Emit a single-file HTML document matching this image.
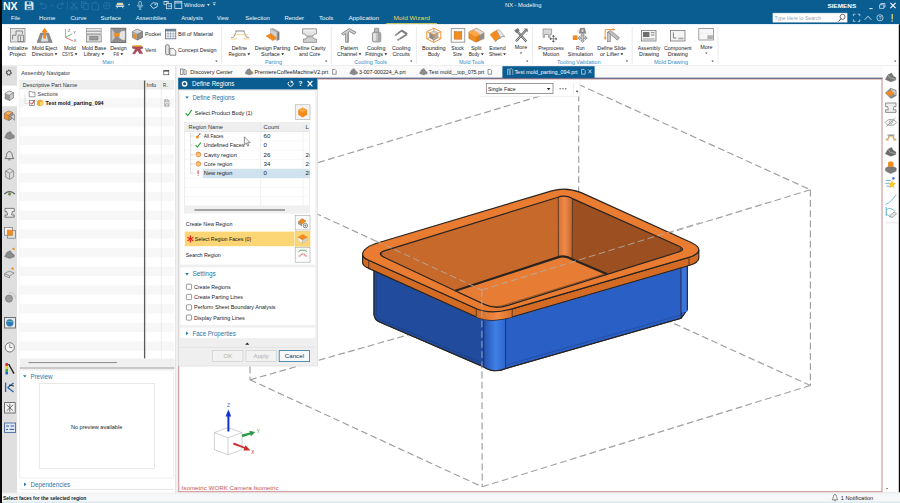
<!DOCTYPE html>
<html lang="en"><head><meta charset="utf-8"><title>NX - Modeling</title>
<style>
html,body{margin:0;padding:0;background:#fff;overflow:hidden}
body{width:900px;height:503px;position:relative}
svg{position:absolute;left:0;top:0;display:block;font-family:"Liberation Sans", sans-serif;}
text{white-space:pre}
</style></head><body>
<svg width="900" height="503" viewBox="0 0 900 503">
<defs>
<clipPath id="cl3"><rect x="300" y="120" width="9.6" height="95"/></clipPath>
<linearGradient id="gfil" x1="0" x2="1" y1="0" y2="0"><stop offset="0" stop-color="#2552b0"/><stop offset="0.55" stop-color="#3f7fe6"/><stop offset="1" stop-color="#2e66cf"/></linearGradient>
<linearGradient id="gofil" x1="0" x2="1" y1="0" y2="0"><stop offset="0" stop-color="#d5702f"/><stop offset="0.45" stop-color="#ef8a4c"/><stop offset="1" stop-color="#c4652b"/></linearGradient>
<linearGradient id="gorf" x1="0" x2="1" y1="0" y2="0"><stop offset="0" stop-color="#d06a25"/><stop offset="0.6" stop-color="#f08a45"/><stop offset="1" stop-color="#d8722c"/></linearGradient>
</defs>
<rect x="0" y="0" width="900" height="503" fill="#ffffff" />
<rect x="0" y="0" width="900" height="24.3" fill="#0a5d90" />
<text x="3" y="9.5" font-size="10" fill="#fff" font-weight="bold" textLength="14.6" lengthAdjust="spacingAndGlyphs" >NX</text>
<g transform="translate(0,-0.5)">
<path d="M25,2.2h7.2l1,1v7h-8.2z" fill="#cfe2ee" stroke="#e4eef5" stroke-width="0.5" />
<rect x="26.8" y="2.4" width="4.2" height="2.6" fill="#0a5d90" />
<rect x="29.4" y="2.8" width="1" height="1.8" fill="#cfe2ee" />
<rect x="26.6" y="6.6" width="5" height="3.4" fill="#0a5d90" />
<rect x="27.6" y="7.6" width="3" height="1.2" fill="#cfe2ee" />
<path d="M40.4,4.4h3.4a2.4,2.4 0 0 1 0,4.8h-1.8 M42,2.4l-2.2,2l2.2,2" fill="none" stroke="#2878ad" stroke-width="0.9" />
<rect x="51.6" y="5.4" width="1.2" height="1.2" fill="#2878ad" />
<path d="M63,4.4h-3.4a2.4,2.4 0 0 0 0,4.8h1.8 M61.4,2.4l2.2,2l-2.2,2" fill="none" stroke="#2878ad" stroke-width="0.9" />
<line x1="67.5" y1="2" x2="67.5" y2="10.4" stroke="#2878ad" stroke-width="0.5" />
<path d="M71.4,2.6l4.6,5.6 M76.4,2.6l-4.6,5.6" fill="none" stroke="#2878ad" stroke-width="0.9" />
<circle cx="71.6" cy="8.8" r="1.2" fill="none" stroke="#2878ad" stroke-width="0.7"/>
<circle cx="76.4" cy="8.8" r="1.2" fill="none" stroke="#2878ad" stroke-width="0.7"/>
<rect x="81.4" y="2.4" width="4.4" height="5.8" fill="none" stroke="#2878ad" stroke-width="0.8" />
<rect x="83.8" y="4" width="4.4" height="6" fill="#0a5d90" stroke="#2878ad" stroke-width="0.8" />
<path d="M92,3.4h4.2l2.4,2.4v4.6h-6.6z M94,2.6h2.6" fill="none" stroke="#2878ad" stroke-width="0.8" />
<circle cx="106.8" cy="6.2" r="3.4" fill="none" stroke="#2878ad" stroke-width="0.7"/>
<path d="M106.8,2.8v6.8 M103.4,6.2h6.8" fill="none" stroke="#2878ad" stroke-width="0.6" />
<path d="M116.4,5.6h7.2l-0.8,-2.4h-5.6z" fill="#e6d9a8" />
<path d="M115.8,6h8.4v1.4h-8.4z" fill="#d8e6f0" />
<path d="M116.6,8.6l1.4,-1.2 M123.4,8.6l-1.4,-1.2" fill="none" stroke="#d8e6f0" stroke-width="0.8" />
<rect x="128.4" y="4.4" width="1.3" height="1.3" fill="#d8e6f0" />
<rect x="138.8" y="1.8" width="2.6" height="5" fill="none" stroke="#cfe2ee" stroke-width="0.7" rx="1.3" />
<path d="M137.4,5.4c0,3.2 5.4,3.2 5.4,0 M140.1,8v1.8 M138.8,9.8h2.6" fill="none" stroke="#cfe2ee" stroke-width="0.6" />
<path d="M150.4,5.6l2.8,-2.4l4.4,0.6l-0.6,3.6l-3.8,1.6z" fill="none" stroke="#e4eef5" stroke-width="0.8" />
<rect x="154.6" y="4.4" width="1.2" height="1.2" fill="#e4eef5" />
<path d="M164,2h4.4v3" fill="none" stroke="#d8e6f0" stroke-width="0.8" />
<rect x="164" y="2" width="3" height="3" fill="none" stroke="#d8e6f0" stroke-width="0.7" />
<rect x="166.4" y="4.2" width="5" height="5" fill="#0a5d90" stroke="#d8e6f0" stroke-width="0.8" />
<line x1="168" y1="6.6" x2="171.4" y2="6.6" stroke="#d8e6f0" stroke-width="0.8" />
<rect x="174.8" y="1.8" width="7" height="7.2" fill="none" stroke="#d8e6f0" stroke-width="0.8" />
<line x1="174.8" y1="3.4" x2="181.8" y2="3.4" stroke="#d8e6f0" stroke-width="0.9" />
<text x="184" y="7.56" font-size="6.0" fill="#e8f0f6" textLength="20.6" lengthAdjust="spacingAndGlyphs" >Window</text>
<path d="M207,4.6l1.5,1.8l1.5,-1.8z" fill="#d8e6f0" />
<path d="M212.8,4.2l1.5,1.9l1.5,-1.9z" fill="#d8e6f0" />
<line x1="212.8" y1="3" x2="215.8" y2="3" stroke="#d8e6f0" stroke-width="0.6" />
</g>
<text x="505" y="7.49" font-size="5.8" fill="#eef4f8" textLength="36.5" lengthAdjust="spacingAndGlyphs" >NX - Modeling</text>
<text x="827.6" y="8.05" font-size="5.7" fill="#fff" font-weight="bold" textLength="28.6" lengthAdjust="spacingAndGlyphs" >SIEMENS</text>
<rect x="869.4" y="8.2" width="3.2" height="0.9" fill="#fff" />
<path d="M879.6,4.8h4.2v3.6h-4.2z M880.8,4.8v-1.3h4.2v3.6h-1.2" fill="none" stroke="#e8f0f6" stroke-width="0.7" />
<path d="M890.4,2.8l5.2,5.4 M895.6,2.8l-5.2,5.4" fill="none" stroke="#fff" stroke-width="1.1" />
<text x="11" y="20.13" font-size="6.2" fill="#f2f6f9" textLength="9" lengthAdjust="spacingAndGlyphs" >File</text>
<text x="39" y="20.13" font-size="6.2" fill="#f2f6f9" textLength="16.5" lengthAdjust="spacingAndGlyphs" >Home</text>
<text x="70.5" y="20.13" font-size="6.2" fill="#f2f6f9" textLength="16" lengthAdjust="spacingAndGlyphs" >Curve</text>
<text x="100.5" y="20.13" font-size="6.2" fill="#f2f6f9" textLength="20.5" lengthAdjust="spacingAndGlyphs" >Surface</text>
<text x="135.8" y="20.13" font-size="6.2" fill="#f2f6f9" textLength="30.4" lengthAdjust="spacingAndGlyphs" >Assemblies</text>
<text x="181.2" y="20.13" font-size="6.2" fill="#f2f6f9" textLength="21.6" lengthAdjust="spacingAndGlyphs" >Analysis</text>
<text x="217" y="20.13" font-size="6.2" fill="#f2f6f9" textLength="11.6" lengthAdjust="spacingAndGlyphs" >View</text>
<text x="245.2" y="20.13" font-size="6.2" fill="#f2f6f9" textLength="24.6" lengthAdjust="spacingAndGlyphs" >Selection</text>
<text x="284.4" y="20.13" font-size="6.2" fill="#f2f6f9" textLength="19.6" lengthAdjust="spacingAndGlyphs" >Render</text>
<text x="319" y="20.13" font-size="6.2" fill="#f2f6f9" textLength="14.4" lengthAdjust="spacingAndGlyphs" >Tools</text>
<text x="348.4" y="20.13" font-size="6.2" fill="#f2f6f9" textLength="30.6" lengthAdjust="spacingAndGlyphs" >Application</text>
<text x="393.6" y="20.13" font-size="6.2" fill="#e9d758" textLength="36.4" lengthAdjust="spacingAndGlyphs" >Mold Wizard</text>
<rect x="386.4" y="23.2" width="50.6" height="1.1" fill="#e9d758" />
<rect x="772.8" y="13" width="74.4" height="9.4" fill="#ffffff" stroke="#7fa9c4" stroke-width="0.5" />
<text x="774.6" y="19.99" font-size="5.8" fill="#9aa6b0" textLength="46.4" lengthAdjust="spacingAndGlyphs" >Type Here to Search</text>
<path d="M838.6,21.4l2.4,-2.8" fill="none" stroke="#4a4a4a" stroke-width="1" />
<circle cx="842.6" cy="16.8" r="2.5" fill="none" stroke="#4a4a4a" stroke-width="0.8"/>
<path d="M853.4,16.2v-2h2 M857.8,14.2h2v2 M859.8,19.4v2h-2 M855.4,21.4h-2v-2" fill="none" stroke="#e8f0f6" stroke-width="0.7" />
<path d="M864.6,19.8l3.4,-3.6l3.4,3.6" fill="none" stroke="#e8f0f6" stroke-width="0.8" />
<circle cx="880" cy="17.8" r="3.1" fill="none" stroke="#e8f0f6" stroke-width="0.7"/>
<text x="880" y="19.73" font-size="4.8" fill="#e8f0f6" text-anchor="middle" >?</text>
<rect x="891.6" y="14" width="1.2" height="5.4" fill="#efe07a" />
<rect x="891.6" y="20.4" width="1.2" height="1.3" fill="#efe07a" />
<rect x="2" y="24.3" width="898" height="41.4" fill="#ffffff" />
<line x1="2" y1="65.8" x2="900" y2="65.8" stroke="#d9d9d9" stroke-width="0.6" />
<rect x="10.4" y="28.4" width="14.6" height="13.6" fill="#e6e6e6" stroke="#8a8a8a" stroke-width="0.8" />
<path d="M12.6,39.6v-4.4h3.4v-4.2h6.4v3 M18,35.2h5.6v6.4h-5.6z M20.6,36.2v4.6" fill="none" stroke="#707070" stroke-width="0.8" />
<text x="17.6" y="49.8" font-size="6.1" fill="#1c1c1c" text-anchor="middle" textLength="20.4" lengthAdjust="spacingAndGlyphs" >Initialize</text>
<text x="17.6" y="56.2" font-size="6.1" fill="#1c1c1c" text-anchor="middle" textLength="16.4" lengthAdjust="spacingAndGlyphs" >Project</text>
<path d="M37,42.4l3.6,-9.4h8l3.6,9.4z" fill="#8c8c8c" stroke="#666" stroke-width="0.5" />
<path d="M40.8,41.4l1.8,-6.4h4l1.8,6.4z" fill="#dcdcdc" />
<path d="M43.2,38.6v-6.4h-1.8l3.2,-4.4l3.2,4.4h-1.8v6.4z" fill="#f28c1e" />
<text x="44.6" y="49.8" font-size="6.1" fill="#1c1c1c" text-anchor="middle" textLength="25.4" lengthAdjust="spacingAndGlyphs" >Mold Eject</text>
<text x="42.5" y="56.2" font-size="6.1" fill="#1c1c1c" text-anchor="middle" textLength="21.400000000000002" lengthAdjust="spacingAndGlyphs" >Direction</text>
<path d="M54.6,53.3h2.8l-1.4,1.9z" fill="#222" />
<path d="M65.6,29v8.4" fill="none" stroke="#5a9ae0" stroke-width="0.8" />
<path d="M65.6,37.4l6.6,-3.6" fill="none" stroke="#48a860" stroke-width="0.8" />
<path d="M65.6,37.4l7.4,3.6" fill="none" stroke="#d85050" stroke-width="0.8" />
<text x="69" y="31.98" font-size="4.4" fill="#555" text-anchor="middle" >Z</text>
<text x="74.4" y="34.18" font-size="4.4" fill="#555" text-anchor="middle" >Y</text>
<text x="75" y="42.18" font-size="4.4" fill="#555" text-anchor="middle" >X</text>
<text x="69.8" y="49.8" font-size="6.1" fill="#1c1c1c" text-anchor="middle" textLength="11.8" lengthAdjust="spacingAndGlyphs" >Mold</text>
<text x="67.7" y="56.2" font-size="6.1" fill="#1c1c1c" text-anchor="middle" textLength="11.2" lengthAdjust="spacingAndGlyphs" >CSYS</text>
<path d="M74.7,53.3h2.8l-1.4,1.9z" fill="#222" />
<rect x="86.6" y="28.4" width="14.6" height="2.6" fill="#ececec" stroke="#8a8a8a" stroke-width="0.6" />
<rect x="86.6" y="31.6" width="14.6" height="2.2" fill="#ececec" stroke="#8a8a8a" stroke-width="0.6" />
<rect x="86.6" y="34.8" width="14.6" height="7.2" fill="#dddddd" stroke="#7a7a7a" stroke-width="0.7" />
<rect x="89.8" y="36.6" width="8.2" height="3.4" fill="#9a9a9a" stroke="#666" stroke-width="0.5" />
<text x="94" y="49.8" font-size="6.1" fill="#1c1c1c" text-anchor="middle" textLength="24.6" lengthAdjust="spacingAndGlyphs" >Mold Base</text>
<text x="91.9" y="56.2" font-size="6.1" fill="#1c1c1c" text-anchor="middle" textLength="16.2" lengthAdjust="spacingAndGlyphs" >Library</text>
<path d="M101.4,53.3h2.8l-1.4,1.9z" fill="#222" />
<rect x="111" y="28.2" width="14.8" height="14.2" fill="#8e8e8e" stroke="#555" stroke-width="0.8" />
<path d="M111.6,28.8h13.6 M111.6,41.8h13.6" fill="none" stroke="#b0b0b0" stroke-width="0.5" stroke-dasharray="0.8,0.8"/>
<path d="M125.4,30.6h-3.4l-3.6,3v3.6l3.6,3h3.4z" fill="#e4e4e4" stroke="#666" stroke-width="0.4" />
<path d="M111.4,28.6l3.6,4.6v4.4l-3.6,4.4z" fill="#c4c4c4" />
<rect x="114.2" y="33" width="5.4" height="3.6" fill="#f28c1e" />
<text x="118.4" y="49.8" font-size="6.1" fill="#1c1c1c" text-anchor="middle" textLength="16.4" lengthAdjust="spacingAndGlyphs" >Design</text>
<text x="116.30000000000001" y="56.2" font-size="6.1" fill="#1c1c1c" text-anchor="middle" textLength="5.3999999999999995" lengthAdjust="spacingAndGlyphs" >Fill</text>
<path d="M120.4,53.3h2.8l-1.4,1.9z" fill="#222" />
<path d="M132.4,31.6l4.8,-2.4l5.2,2.2v6l-5.2,2.6l-4.8,-2.4z" fill="#b4b4b4" stroke="#666" stroke-width="0.6" />
<path d="M137.2,34l5.2,-2.6v6l-5.2,2.6z" fill="#8e8e8e" stroke="#666" stroke-width="0.4" />
<path d="M132.4,31.6l4.8,2.4l5.2,-2.6l-5.2,-2.2z" fill="#d4d4d4" stroke="#666" stroke-width="0.3" />
<path d="M133,33.2l3.6,1.8v3l-1.6,1l-2,-2.2z" fill="#f28c1e" />
<text x="145" y="36.2" font-size="6.1" fill="#1c1c1c" textLength="16" lengthAdjust="spacingAndGlyphs" >Pocket</text>
<path d="M132.4,46.2h9.6l1,2l-3,0.8l2.6,4.6h-3l-2.2,-3.4l-2.4,3.6h-2.4l3,-4.8l-3.2,-0.8z" fill="#b04a58" stroke="#7a2a36" stroke-width="0.4" />
<path d="M133,45.2h8l1,1.4h-9.4z" fill="#f2b21e" />
<text x="145" y="52.2" font-size="6.1" fill="#1c1c1c" textLength="11" lengthAdjust="spacingAndGlyphs" >Vent</text>
<rect x="165.4" y="29.2" width="10.4" height="9.6" fill="#ffffff" stroke="#5c6c7c" stroke-width="0.8" />
<rect x="165.4" y="29.2" width="10.4" height="2.2" fill="#6a7f94" />
<line x1="168" y1="31.4" x2="168" y2="38.8" stroke="#6a7f94" stroke-width="0.5" />
<line x1="170.6" y1="31.4" x2="170.6" y2="38.8" stroke="#6a7f94" stroke-width="0.5" />
<line x1="173.2" y1="31.4" x2="173.2" y2="38.8" stroke="#6a7f94" stroke-width="0.5" />
<line x1="165.4" y1="33.8" x2="175.8" y2="33.8" stroke="#6a7f94" stroke-width="0.5" />
<line x1="165.4" y1="36.2" x2="175.8" y2="36.2" stroke="#6a7f94" stroke-width="0.5" />
<text x="178" y="36.2" font-size="6.1" fill="#1c1c1c" textLength="35" lengthAdjust="spacingAndGlyphs" >Bill of Material</text>
<rect x="165.6" y="44.8" width="3.6" height="10" fill="#e8e8e8" stroke="#555" stroke-width="0.7" rx="1.2" />
<path d="M169.8,48.4h3.4l2.6,2.4v4.4h-6z" fill="#f4f4f4" stroke="#555" stroke-width="0.7" />
<text x="178" y="52.2" font-size="6.1" fill="#1c1c1c" textLength="38.6" lengthAdjust="spacingAndGlyphs" >Concept Design</text>
<text x="108" y="64.36" font-size="6.0" fill="#3b8cc4" text-anchor="middle" textLength="11.6" lengthAdjust="spacingAndGlyphs" >Main</text>
<path d="M215.20000000000002,60.6h2.4l-1.2,1.5z" fill="#444" />
<line x1="221.6" y1="27" x2="221.6" y2="64" stroke="#dcdcdc" stroke-width="0.6" />
<path d="M233,34.6H247.2" fill="none" stroke="#f6dca8" stroke-width="1.1" />
<path d="M230.8,39.2H235.6L236.4,37.4 M249.4,39.2H244.6L243.8,37.4" fill="none" stroke="#f6dca8" stroke-width="1.2" />
<path d="M235.2,31H244.8" fill="none" stroke="#8a8a8a" stroke-width="1.0" />
<path d="M236.6,31L233.6,37.4H231 M243.6,31L246.6,37.4H249.2" fill="none" stroke="#8a8a8a" stroke-width="0.8" />
<text x="239.4" y="49.8" font-size="6.1" fill="#1c1c1c" text-anchor="middle" textLength="15.4" lengthAdjust="spacingAndGlyphs" >Define</text>
<text x="237.3" y="56.2" font-size="6.1" fill="#1c1c1c" text-anchor="middle" textLength="17.400000000000002" lengthAdjust="spacingAndGlyphs" >Regions</text>
<path d="M247.4,53.3h2.8l-1.4,1.9z" fill="#222" />
<path d="M270.6,28.8l6.6,3.6v8.2l-6.6,-4z" fill="#d2d2d2" stroke="#888" stroke-width="0.5" />
<path d="M277.2,32.4l2.2,-0.8v8.2l-2.2,0.8z" fill="#7c7c7c" />
<path d="M270.6,28.8l2.2,-0.8l6.6,3.6l-2.2,0.8z" fill="#a8a8a8" />
<path d="M265.8,36l5,-2.4l5.8,4.2l-3.6,3z" fill="#f28c1e" stroke="#d07010" stroke-width="0.3" />
<text x="272.6" y="49.8" font-size="6.1" fill="#1c1c1c" text-anchor="middle" textLength="35.6" lengthAdjust="spacingAndGlyphs" >Design Parting</text>
<text x="270.5" y="56.2" font-size="6.1" fill="#1c1c1c" text-anchor="middle" textLength="18.8" lengthAdjust="spacingAndGlyphs" >Surface</text>
<path d="M281.3,53.3h2.8l-1.4,1.9z" fill="#222" />
<path d="M302.6,28.8h14v5.2h-2.4l-1.2,2h-6.8l-1.2,-2h-2.4z" fill="#e4e4e4" stroke="#8a8a8a" stroke-width="0.8" />
<path d="M304.6,30.6h10" fill="none" stroke="#f4f4f4" stroke-width="1.2" />
<path d="M303.4,42.4v-3.4h2.6l1.2,-2.2h5.6l1.2,2.2h2.6v3.4z" fill="#cfcfcf" stroke="#8a8a8a" stroke-width="0.8" />
<text x="309.8" y="49.8" font-size="6.1" fill="#1c1c1c" text-anchor="middle" textLength="31.6" lengthAdjust="spacingAndGlyphs" >Define Cavity</text>
<text x="309.8" y="56.2" font-size="6.1" fill="#1c1c1c" text-anchor="middle" textLength="21.4" lengthAdjust="spacingAndGlyphs" >and Core</text>
<text x="273.4" y="64.36" font-size="6.0" fill="#3b8cc4" text-anchor="middle" textLength="17" lengthAdjust="spacingAndGlyphs" >Parting</text>
<path d="M325.0,60.6h2.4l-1.2,1.5z" fill="#444" />
<line x1="331.2" y1="27" x2="331.2" y2="64" stroke="#dcdcdc" stroke-width="0.6" />
<path d="M341.6,33.6l7.6,-5l6.8,3.6l-1.6,2l-5.2,-2.8l-0.8,0.6v10.2h-2.8v-8.6l-2.4,1.6z" fill="#d0d0d0" stroke="#6a6a6a" stroke-width="0.7" />
<path d="M347.6,33.4v8.8" fill="none" stroke="#9a9a9a" stroke-width="0.8" />
<text x="349.2" y="49.8" font-size="6.1" fill="#1c1c1c" text-anchor="middle" textLength="17.6" lengthAdjust="spacingAndGlyphs" >Pattern</text>
<text x="347.09999999999997" y="56.2" font-size="6.1" fill="#1c1c1c" text-anchor="middle" textLength="20.2" lengthAdjust="spacingAndGlyphs" >Channel</text>
<path d="M358.6,53.3h2.8l-1.4,1.9z" fill="#222" />
<rect x="374.4" y="28.2" width="4.4" height="4.4" fill="#cfcfcf" stroke="#666" stroke-width="0.6" rx="0.8" />
<line x1="374.6" y1="29.6" x2="378.6" y2="29.6" stroke="#8a8a8a" stroke-width="0.4" />
<line x1="374.6" y1="30.8" x2="378.6" y2="30.8" stroke="#8a8a8a" stroke-width="0.4" />
<rect x="372.4" y="32.2" width="8.4" height="9.8" fill="#c2c2c2" stroke="#666" stroke-width="0.6" rx="1.6" />
<rect x="373.4" y="33" width="2.4" height="8.2" fill="#e6e6e6" rx="1" />
<rect x="378" y="33" width="2" height="8.2" fill="#a4a4a4" rx="1" />
<text x="376.2" y="49.8" font-size="6.1" fill="#1c1c1c" text-anchor="middle" textLength="18.4" lengthAdjust="spacingAndGlyphs" >Cooling</text>
<text x="374.09999999999997" y="56.2" font-size="6.1" fill="#1c1c1c" text-anchor="middle" textLength="17.8" lengthAdjust="spacingAndGlyphs" >Fittings</text>
<path d="M384.4,53.3h2.8l-1.4,1.9z" fill="#222" />
<path d="M395,35.6l6.6,-5 M397.4,40.4l9.6,-6.2" fill="none" stroke="#7c7c7c" stroke-width="1.7" />
<path d="M401.4,30.4l5.8,3.8" fill="none" stroke="#7c7c7c" stroke-width="2" />
<path d="M395,35.6l2.4,-1.8 M397.4,40.4l2.8,-1.8" fill="none" stroke="#ffffff" stroke-width="0.6" stroke-dasharray="1,1"/>
<text x="401.2" y="49.8" font-size="6.1" fill="#1c1c1c" text-anchor="middle" textLength="18.4" lengthAdjust="spacingAndGlyphs" >Cooling</text>
<text x="401.2" y="56.2" font-size="6.1" fill="#1c1c1c" text-anchor="middle" textLength="17.6" lengthAdjust="spacingAndGlyphs" >Circuits</text>
<text x="370.6" y="64.36" font-size="6.0" fill="#3b8cc4" text-anchor="middle" textLength="32.8" lengthAdjust="spacingAndGlyphs" >Cooling Tools</text>
<path d="M410.0,60.6h2.4l-1.2,1.5z" fill="#444" />
<line x1="416.4" y1="27" x2="416.4" y2="64" stroke="#dcdcdc" stroke-width="0.6" />
<path d="M429.6,33l4.2,-2l4.2,2v4.8l-4.2,2.2l-4.2,-2.2z" fill="#8c8c8c" stroke="#666" stroke-width="0.4" />
<path d="M429.6,33l4.2,2l4.2,-2l-4.2,-2z" fill="#d4d4d4" />
<path d="M433.8,35v5l4.2,-2.2v-4.8z" fill="#a8a8a8" />
<path d="M426.8,31.6l7,-3.4l7,3.4v7.2l-7,3.6l-7,-3.6z M426.8,31.6l7,3.4l7,-3.4 M433.8,35v7.4 M433.8,28.2v3 M426.8,38.8l3,-1.4 M440.8,38.8l-3,-1.4" fill="none" stroke="#f08a24" stroke-width="0.9" />
<text x="433.8" y="49.8" font-size="6.1" fill="#1c1c1c" text-anchor="middle" textLength="23.6" lengthAdjust="spacingAndGlyphs" >Bounding</text>
<text x="433.8" y="56.2" font-size="6.1" fill="#1c1c1c" text-anchor="middle" textLength="11.8" lengthAdjust="spacingAndGlyphs" >Body</text>
<rect x="451.2" y="28.6" width="13.6" height="13.6" fill="#fafafa" stroke="#8a8a8a" stroke-width="0.8" />
<rect x="454.2" y="31.6" width="7.6" height="7.6" fill="#f28c1e" stroke="#b55e10" stroke-width="0.4" />
<text x="457.6" y="49.8" font-size="6.1" fill="#1c1c1c" text-anchor="middle" textLength="12.6" lengthAdjust="spacingAndGlyphs" >Stock</text>
<text x="457.6" y="56.2" font-size="6.1" fill="#1c1c1c" text-anchor="middle" textLength="9" lengthAdjust="spacingAndGlyphs" >Size</text>
<path d="M468.8,32l7.2,4.4v5.8l-7.2,-3.6z" fill="#f28c1e" />
<path d="M476,36.4l8.1,-3.8v6l-8.1,3.6z" fill="#8e8e8e" />
<path d="M476,36.4l3.4,-1.6v6l-3.4,1.4z" fill="#e07c14" />
<path d="M468.8,32l7.7,-4l7.6,4.6l-8.1,3.8z" fill="#fba548" />
<path d="M476.5,28l7.6,4.6l-3.4,1.6l-7.4,-4.4z" fill="#dcdcdc" />
<path d="M468.8,32l7.7,-4l7.6,4.6v6l-8.1,3.6l-7.2,-3.6z" fill="none" stroke="#9a6a3a" stroke-width="0.4" />
<text x="476.2" y="49.8" font-size="6.1" fill="#1c1c1c" text-anchor="middle" textLength="10.6" lengthAdjust="spacingAndGlyphs" >Split</text>
<text x="474.09999999999997" y="56.2" font-size="6.1" fill="#1c1c1c" text-anchor="middle" textLength="10.8" lengthAdjust="spacingAndGlyphs" >Body</text>
<path d="M480.9,53.3h2.8l-1.4,1.9z" fill="#222" />
<path d="M490,34.6c2,-1.6 4,-3.4 6.6,-4.4l4,7.8c-2,0.6 -3.6,1.8 -5.2,3.6z" fill="#f28c1e" stroke="#d07010" stroke-width="0.3" />
<path d="M496.6,30.2c1.6,-0.8 2.6,-0.6 3.6,0.4l4.6,6c-1.4,-0.6 -2.8,-0.2 -4.2,1.4z" fill="#e4e4e4" stroke="#8a8a8a" stroke-width="0.5" />
<path d="M495.4,41.6c1.6,-1.8 3.2,-3 5.2,-3.6c1.4,-1.6 2.8,-2 4.2,-1.4" fill="none" stroke="#8a8a8a" stroke-width="0.7" />
<text x="497.4" y="49.8" font-size="6.1" fill="#1c1c1c" text-anchor="middle" textLength="16.4" lengthAdjust="spacingAndGlyphs" >Extend</text>
<text x="495.29999999999995" y="56.2" font-size="6.1" fill="#1c1c1c" text-anchor="middle" textLength="12.8" lengthAdjust="spacingAndGlyphs" >Sheet</text>
<path d="M503.1,53.3h2.8l-1.4,1.9z" fill="#222" />
<path d="M516.4,30.4l10,11" fill="none" stroke="#5a5a5a" stroke-width="2.2" />
<path d="M516.4,30.4l10,11" fill="none" stroke="#d8d8d8" stroke-width="0.9" />
<path d="M526.6,29.6l-10.6,11.6" fill="none" stroke="#5a5a5a" stroke-width="2.2" />
<path d="M526.6,29.6l-10.6,11.6" fill="none" stroke="#d8d8d8" stroke-width="0.9" />
<path d="M514.2,30.6l3.4,-2.6l2.2,2.6l-3.2,2.6z" fill="#7a7a7a" />
<path d="M524,28.2l3.6,0.6l0.4,3l-2,-0.6z" fill="#7a7a7a" />
<text x="521" y="49.4" font-size="6.1" fill="#1c1c1c" text-anchor="middle" textLength="12.4" lengthAdjust="spacingAndGlyphs" >More</text>
<path d="M519.8,52.4h2.4l-1.2,1.5z" fill="#444" />
<text x="471.6" y="64.36" font-size="6.0" fill="#3b8cc4" text-anchor="middle" textLength="25.4" lengthAdjust="spacingAndGlyphs" >Mold Tools</text>
<path d="M526.0,60.6h2.4l-1.2,1.5z" fill="#444" />
<line x1="532.4" y1="27" x2="532.4" y2="64" stroke="#dcdcdc" stroke-width="0.6" />
<path d="M543,29h8.6v5.4h-1.6v3h-1.6v-3h-3.8v3h-1.6z" fill="#d8d8d8" stroke="#777" stroke-width="0.6" />
<path d="M553.4,35.2v7 M549.8,38.8h7.2 M553.4,35.2l-1,1.2h2z M553.4,42.2l-1,-1.2h2z M549.8,38.8l1.2,-1v2z M557,38.8l-1.2,-1v2z" fill="#555" stroke="#555" stroke-width="0.6" />
<text x="551" y="49.8" font-size="6.1" fill="#1c1c1c" text-anchor="middle" textLength="25.6" lengthAdjust="spacingAndGlyphs" >Preprocess</text>
<text x="551" y="56.2" font-size="6.1" fill="#1c1c1c" text-anchor="middle" textLength="16.6" lengthAdjust="spacingAndGlyphs" >Motion</text>
<rect x="572.8" y="35.4" width="4.8" height="4.6" fill="#f28c1e" />
<path d="M576.6,32.6l3.6,-3.4" fill="none" stroke="#e8a060" stroke-width="0.6" />
<path d="M580.4,28.2h4.2l1.2,5h-6.6z" fill="#8a8a8a" stroke="#5a5a5a" stroke-width="0.4" />
<rect x="581.6" y="29.4" width="1.8" height="2.6" fill="#d8d8d8" />
<path d="M582.6,33.2l1.8,2h-1.1v2h2v-1.1l2,1.8l-2,1.8v-1.1h-2v2h1.1l-1.8,2l-1.8,-2h1.1v-2h-2v1.1l-2,-1.8l2,-1.8v1.1h2v-2h-1.1z" fill="#d4d4d4" stroke="#555" stroke-width="0.5" />
<text x="580.4" y="49.8" font-size="6.1" fill="#1c1c1c" text-anchor="middle" textLength="8.6" lengthAdjust="spacingAndGlyphs" >Run</text>
<text x="580.4" y="56.2" font-size="6.1" fill="#1c1c1c" text-anchor="middle" textLength="25.2" lengthAdjust="spacingAndGlyphs" >Simulation</text>
<rect x="607.6" y="32.4" width="2.8" height="9.4" fill="#c6c6c6" stroke="#6a6a6a" stroke-width="0.5" />
<path d="M607.8,32l2.6,-1.6l9,7.2l-2,2.6z" fill="#c0c0c0" stroke="#6a6a6a" stroke-width="0.6" />
<path d="M605.2,38v-8.4h8" fill="none" stroke="#f08a24" stroke-width="0.9" />
<path d="M615.2,29.6l-2.4,-1.5v3z M605.2,40l-1.5,-2.4h3z" fill="#f08a24" />
<text x="611.6" y="49.8" font-size="6.1" fill="#1c1c1c" text-anchor="middle" textLength="28.6" lengthAdjust="spacingAndGlyphs" >Define Slide</text>
<text x="609.5" y="56.2" font-size="6.1" fill="#1c1c1c" text-anchor="middle" textLength="19.2" lengthAdjust="spacingAndGlyphs" >or Lifter</text>
<path d="M620.5,53.3h2.8l-1.4,1.9z" fill="#222" />
<text x="578.8" y="64.36" font-size="6.0" fill="#3b8cc4" text-anchor="middle" textLength="43.6" lengthAdjust="spacingAndGlyphs" >Tooling Validation</text>
<path d="M625.8,60.6h2.4l-1.2,1.5z" fill="#444" />
<line x1="632.2" y1="27" x2="632.2" y2="64" stroke="#dcdcdc" stroke-width="0.6" />
<rect x="641.4" y="30.4" width="14.6" height="10.6" fill="#f4f4f4" stroke="#777" stroke-width="0.8" />
<rect x="643" y="32" width="6.4" height="5" fill="#6f6f6f" />
<rect x="651" y="32" width="3.4" height="1.2" fill="#999" />
<rect x="651" y="34.4" width="3.4" height="1.2" fill="#999" />
<rect x="643" y="38.4" width="11.4" height="1.2" fill="#aaa" />
<text x="649" y="49.8" font-size="6.1" fill="#1c1c1c" text-anchor="middle" textLength="22.6" lengthAdjust="spacingAndGlyphs" >Assembly</text>
<text x="649" y="56.2" font-size="6.1" fill="#1c1c1c" text-anchor="middle" textLength="20" lengthAdjust="spacingAndGlyphs" >Drawing</text>
<rect x="670.4" y="30.4" width="14.6" height="10.6" fill="#f4f4f4" stroke="#777" stroke-width="0.8" />
<path d="M673.4,32.4v5.6h3" fill="none" stroke="#666" stroke-width="0.8" />
<rect x="678.4" y="37.6" width="5" height="1.8" fill="#aaa" />
<text x="677.8" y="49.8" font-size="6.1" fill="#1c1c1c" text-anchor="middle" textLength="27.6" lengthAdjust="spacingAndGlyphs" >Component</text>
<text x="677.8" y="56.2" font-size="6.1" fill="#1c1c1c" text-anchor="middle" textLength="20" lengthAdjust="spacingAndGlyphs" >Drawing</text>
<rect x="698.8" y="28.6" width="14.8" height="11.4" fill="#f7f7f7" stroke="#888" stroke-width="0.8" />
<rect x="707.4" y="35.2" width="5.4" height="3.8" fill="#b0b0b0" />
<line x1="699" y1="33.4" x2="713.4" y2="33.4" stroke="#e6e6e6" stroke-width="0.5" />
<text x="706.4" y="49.4" font-size="6.1" fill="#1c1c1c" text-anchor="middle" textLength="12.4" lengthAdjust="spacingAndGlyphs" >More</text>
<path d="M705.2,52.4h2.4l-1.2,1.5z" fill="#444" />
<text x="671" y="64.36" font-size="6.0" fill="#3b8cc4" text-anchor="middle" textLength="34.2" lengthAdjust="spacingAndGlyphs" >Mold Drawing</text>
<path d="M711.4,60.6h2.4l-1.2,1.5z" fill="#444" />
<line x1="718" y1="27" x2="718" y2="64" stroke="#dcdcdc" stroke-width="0.6" />
<path d="M894,60.6h2.4l-1.2,1.5z" fill="#444" />
<rect x="2" y="66.2" width="898" height="11.6" fill="#fafafa" />
<rect x="17" y="66.2" width="158.6" height="11.6" fill="#f7f7f7" />
<rect x="180.6" y="69" width="2.4" height="5.4" fill="none" stroke="#555" stroke-width="0.6" />
<path d="M184,69.2v5.2h2.2v-4z" fill="none" stroke="#555" stroke-width="0.6" />
<text x="190.2" y="74.03" font-size="6.2" fill="#1c1c1c" textLength="42.4" lengthAdjust="spacingAndGlyphs" >Discovery Center</text>
<path d="M245,73.4l2,-3.6l2.6,-1.4l1.6,2.6l1.6,1v1.8l-3.6,1.2z" fill="#8a8a8a" stroke="#666" stroke-width="0.3" />
<text x="254.4" y="74.03" font-size="6.2" fill="#1c1c1c" textLength="73.8" lengthAdjust="spacingAndGlyphs" >PremiereCoffeeMachineV2.prt</text>
<path d="M332.6,69.4h2.4l1.2,1.2v3.6h-3.6z" fill="none" stroke="#555" stroke-width="0.6" />
<path d="M349.6,73.4l2,-3.6l2.6,-1.4l1.6,2.6l1.6,1v1.8l-3.6,1.2z" fill="#8a8a8a" stroke="#666" stroke-width="0.3" />
<text x="359" y="74.03" font-size="6.2" fill="#1c1c1c" textLength="46.6" lengthAdjust="spacingAndGlyphs" >3-007-000224_A.prt</text>
<path d="M419.4,73.4l2,-3.6l2.6,-1.4l1.6,2.6l1.6,1v1.8l-3.6,1.2z" fill="#8a8a8a" stroke="#666" stroke-width="0.3" />
<text x="428.8" y="74.03" font-size="6.2" fill="#1c1c1c" textLength="55.4" lengthAdjust="spacingAndGlyphs" >Test mold__top_075.prt</text>
<path d="M488,69.4h2.4l1.2,1.2v3.6h-3.6z" fill="none" stroke="#555" stroke-width="0.6" />
<rect x="502.4" y="66.2" width="92.2" height="11.8" fill="#0a5d90" />
<path d="M507.6,75v-6h1.6v6 M510.2,75v-6.2h1.8l0.8,1v5.2" fill="none" stroke="#cfe0ec" stroke-width="0.6" />
<text x="514.4" y="74.03" font-size="6.2" fill="#ffffff" textLength="63.2" lengthAdjust="spacingAndGlyphs" >Test mold_parting_094.prt</text>
<path d="M581.6,69.4h2.4l1.2,1.2v3.6h-3.6z" fill="none" stroke="#ffffff" stroke-width="0.6" />
<path d="M588.4,69.6l3.2,3.6 M591.6,69.6l-3.2,3.6" fill="none" stroke="#fff" stroke-width="0.7" />
<rect x="882.6" y="66.2" width="17.4" height="426.4" fill="#ffffff" />
<path d="M885.4,79.4l2.6,-4.6l3.4,-1.8l2,3.2l2.4,1.4v2.4l-5,1.8z" fill="#777" stroke="#555" stroke-width="0.4" />
<path d="M888.0,74.8l2,3l5.4,1.6" fill="none" stroke="#d8d8d8" stroke-width="0.5" />
<path d="M885.4,93l5,-4.6l5.6,2v5.4l-5,2.8z" fill="#8a8a8a" stroke="#555" stroke-width="0.4" />
<path d="M890.4,88.4l5.6,2v5.4l-4.4,-2.6z" fill="#c8c8c8" stroke="#666" stroke-width="0.4" />
<path d="M885.4,93l5.6,-2.6l3.4,3l-4.6,2.8z" fill="#f28c1e" />
<path d="M885.6,103h10.4v3.6h-2l-0.8,3.2h2.8v2.6h-10.4v-2.6h2.8l-0.8,-3.2h-2z" fill="#eeeeee" stroke="#666" stroke-width="0.7" />
<path d="M885.2,122.4c2.6,-4 8.6,-4 11.2,0c-2.6,4 -8.6,4 -11.2,0z M886.4,126.6l9,-8.6" fill="none" stroke="#777" stroke-width="0.7" />
<circle cx="890.8" cy="122.4" r="1.6" fill="none" stroke="#777" stroke-width="0.6"/>
<path d="M885.6,140h2.4l1.2,-3.6h3.6l1.2,3.6h2.4" fill="none" stroke="#f6d9a0" stroke-width="1.8" />
<path d="M885.6,139.2h2.2l1.2,-3.6h4l1.2,3.6h2.2" fill="none" stroke="#777" stroke-width="0.6" />
<line x1="887.4" y1="135" x2="894.6" y2="135" stroke="#777" stroke-width="0.8" />
<path d="M885.4,153.8l2.6,-4.6l3.4,-1.8l2,3.2l2.4,1.4v2.4l-5,1.8z" fill="#6a6a6a" stroke="#555" stroke-width="0.4" />
<path d="M888.0,149.20000000000002l2,3l5.4,1.6" fill="none" stroke="#d8d8d8" stroke-width="0.5" />
<path d="M885.6,168l5.2,-2.4l5.4,2.4v3l-5.4,2.6l-5.2,-2.6z" fill="#7a7a7a" stroke="#555" stroke-width="0.4" />
<rect x="888" y="161.4" width="5.4" height="5.6" fill="#f28c1e" rx="1.8" />
<path d="M885.8,180.6h5 M885.4,183.4h4.4 M886.4,186.2h3.6" fill="none" stroke="#6aa8e0" stroke-width="0.9" />
<circle cx="893.4" cy="178.4" r="1.3" fill="#5a78d0"/>
<path d="M892,180.6l1.1,2.4l2.6,0.3l-1.9,1.8l0.5,2.6l-2.3,-1.3l-2.3,1.3l0.5,-2.6l-1.9,-1.8l2.6,-0.3z" fill="#f4cc2a" stroke="#d0a010" stroke-width="0.2" />
<path d="M885.6,204.4c5.6,-1.8 7.4,-6.4 10.8,-9.8" fill="none" stroke="#3aa0c8" stroke-width="0.7" />
<path d="M886.2,207v9 M886.2,209.6c3,-2 6,-1 8.6,1.4 M886.2,213c1.4,2.4 3,3.6 5,4.2" fill="none" stroke="#2a9ab8" stroke-width="0.7" />
<path d="M889.6,215.6l4.6,-3.6l2.4,1.8l-4.6,3.8z" fill="#e4e4e4" stroke="#777" stroke-width="0.6" />
<line x1="885" y1="222.8" x2="898" y2="222.8" stroke="#d4d4d4" stroke-width="0.6" />
<path d="M886,488h2l-1,1.3z" fill="#444" />
<rect x="898.8" y="24.3" width="1.2" height="468.3" fill="#0a0a0a" />
<rect x="0" y="492.6" width="900" height="10.4" fill="#f6f7f8" />
<line x1="0" y1="492.8" x2="900" y2="492.8" stroke="#d6d6d6" stroke-width="0.6" />
<rect x="0" y="501.4" width="900" height="1.6" fill="#dcebf0" />
<text x="3" y="500.3" font-size="6.1" fill="#1a1a1a" font-weight="bold" textLength="83.4" lengthAdjust="spacingAndGlyphs" >Select faces for the selected region</text>
<path d="M832.2,499.8c1.6,-1.2 0.6,-5.4 2.8,-5.4s1.2,4.2 2.8,5.4z M834.2,500.8h1.6" fill="none" stroke="#444" stroke-width="0.6" />
<text x="840.8" y="500.06" font-size="6.0" fill="#1c1c1c" textLength="32.4" lengthAdjust="spacingAndGlyphs" >1 Notification</text>
<rect x="0" y="0" width="2" height="503" fill="#0a0a0a" />
<rect x="2" y="66.2" width="15" height="426.4" fill="#dfdfdf" />
<rect x="2.2" y="85.6" width="15" height="20.6" fill="#ffffff" />
<rect x="17" y="66.2" width="158.6" height="426.4" fill="#ffffff" />
<line x1="175.8" y1="66.2" x2="175.8" y2="492.6" stroke="#cfcfcf" stroke-width="0.8" />
<rect x="176.2" y="78" width="2" height="414.6" fill="#f0f0f0" />
<circle cx="8.8" cy="72.6" r="2.4" fill="none" stroke="#444" stroke-width="1.3" stroke-dasharray="1.1,0.8"/>
<circle cx="8.8" cy="72.6" r="1.9" fill="none" stroke="#444" stroke-width="0.7"/>
<text x="21.2" y="75.23" font-size="6.2" fill="#333" textLength="49" lengthAdjust="spacingAndGlyphs" >Assembly Navigator</text>
<rect x="163.8" y="70.6" width="5" height="4.2" fill="none" stroke="#333" stroke-width="0.6" />
<line x1="163.8" y1="71" x2="168.8" y2="71" stroke="#333" stroke-width="1" />
<rect x="19.6" y="80.6" width="154.4" height="8.4" fill="#efefef" />
<line x1="19.6" y1="89" x2="174" y2="89" stroke="#dcdcdc" stroke-width="0.5" />
<line x1="19.6" y1="80.6" x2="174" y2="80.6" stroke="#e2e2e2" stroke-width="0.5" />
<text x="22.8" y="87.13" font-size="6.2" fill="#333" textLength="54.4" lengthAdjust="spacingAndGlyphs" >Descriptive Part Name</text>
<text x="146.6" y="87.13" font-size="6.2" fill="#333" textLength="9.6" lengthAdjust="spacingAndGlyphs" >Info</text>
<text x="163" y="87.13" font-size="6.2" fill="#333" textLength="5.6" lengthAdjust="spacingAndGlyphs" >R..</text>
<rect x="19.6" y="98.3" width="154.4" height="9.35" fill="#f7f7f7" />
<rect x="19.6" y="117.0" width="154.4" height="9.35" fill="#f7f7f7" />
<rect x="19.6" y="135.7" width="154.4" height="9.35" fill="#f7f7f7" />
<rect x="19.6" y="154.4" width="154.4" height="9.35" fill="#f7f7f7" />
<rect x="19.6" y="173.1" width="154.4" height="9.35" fill="#f7f7f7" />
<rect x="19.6" y="191.8" width="154.4" height="9.35" fill="#f7f7f7" />
<rect x="19.6" y="210.5" width="154.4" height="9.35" fill="#f7f7f7" />
<rect x="19.6" y="229.2" width="154.4" height="9.35" fill="#f7f7f7" />
<rect x="19.6" y="247.9" width="154.4" height="9.35" fill="#f7f7f7" />
<rect x="19.6" y="266.6" width="154.4" height="9.35" fill="#f7f7f7" />
<rect x="19.6" y="285.3" width="154.4" height="9.35" fill="#f7f7f7" />
<rect x="19.6" y="304.1" width="154.4" height="9.35" fill="#f7f7f7" />
<rect x="19.6" y="322.8" width="154.4" height="9.35" fill="#f7f7f7" />
<rect x="19.6" y="341.5" width="154.4" height="9.35" fill="#f7f7f7" />
<line x1="144.6" y1="80.6" x2="144.6" y2="358.6" stroke="#5a5a5a" stroke-width="1.3" />
<line x1="161.2" y1="80.6" x2="161.2" y2="358.6" stroke="#e2e2e2" stroke-width="0.6" />
<line x1="19.6" y1="79.8" x2="19.6" y2="358.6" stroke="#e8e8e8" stroke-width="0.5" />
<path d="M25,93.6v10h4" fill="none" stroke="#b8b8b8" stroke-width="0.4" />
<path d="M29.2,91.4h2l0.6,0.8h3.2v4.6h-5.8z" fill="none" stroke="#555" stroke-width="0.6" />
<text x="37.6" y="95.83" font-size="6.2" fill="#333" textLength="20.4" lengthAdjust="spacingAndGlyphs" >Sections</text>
<rect x="29.6" y="100.4" width="5" height="5" fill="#fff" stroke="#666" stroke-width="0.6" />
<path d="M30.4,102.6l1.4,1.8l2.8,-4.4" fill="none" stroke="#d42020" stroke-width="0.9" />
<path d="M37.4,101.2l2.6,-1.2l2.8,1v3.6l-2.8,1.4l-2.6,-1.2z" fill="#f2b020" stroke="#a87410" stroke-width="0.4" />
<path d="M40,102.2l2.8,-1.2v3.6l-2.8,1.4z" fill="#f9d870" />
<text x="45.6" y="105.23" font-size="6.2" fill="#111" font-weight="bold" textLength="58" lengthAdjust="spacingAndGlyphs" >Test mold_parting_094</text>
<path d="M164.6,99.8h3.4l1,1v5.4h-4.4z M165.6,99.8v2h2.4v-2 M165.6,106.2v-2.4h2.6v2.4" fill="none" stroke="#777" stroke-width="0.5" />
<rect x="19.6" y="358.6" width="155" height="8.4" fill="#f0f0f0" />
<line x1="28.4" y1="362.6" x2="117" y2="362.6" stroke="#8a8a8a" stroke-width="1.0" />
<rect x="19.6" y="367" width="155" height="2.2" fill="#c9c9c9" />
<rect x="19.6" y="370" width="154" height="108" fill="#ffffff" stroke="#e0e0e0" stroke-width="0.5" />
<path d="M23,375.2h3.6l-1.8,2.4z" fill="#2a76a6" />
<text x="30.4" y="378.85" font-size="6.8" fill="#2a76a6" textLength="22" lengthAdjust="spacingAndGlyphs" >Preview</text>
<rect x="39.2" y="383.6" width="115.4" height="85" fill="#ffffff" stroke="#dadada" stroke-width="0.6" />
<text x="96.6" y="428.8" font-size="6.1" fill="#222" text-anchor="middle" textLength="51.4" lengthAdjust="spacingAndGlyphs" >No preview available</text>
<path d="M24,482.4v3.8l2.4,-1.9z" fill="#2a76a6" />
<text x="30.6" y="486.85" font-size="6.8" fill="#2a76a6" textLength="39.6" lengthAdjust="spacingAndGlyphs" >Dependencies</text>
<line x1="19.6" y1="489.4" x2="173.6" y2="489.4" stroke="#d0d0d0" stroke-width="0.6" />
<path d="M5,93.4l4,-2.4l4.4,1.6v5.4l-4,2.6l-4.4,-1.8z" fill="#9a9a9a" stroke="#555" stroke-width="0.4" />
<path d="M5,93.4l4.4,1.8l4,-2.6l-4.4,-1.6z" fill="#e6e6e6" stroke="#555" stroke-width="0.3" />
<path d="M9.4,95.2l4,-2.6v5.4l-4,2.6z" fill="#c8c8c8" stroke="#555" stroke-width="0.3" />
<path d="M4.4,113.4l4,-2.4l4.4,1.6v5.4l-4,2.6l-4.4,-1.8z" fill="#f28c1e" stroke="#555" stroke-width="0.4" />
<path d="M4.4,113.4l4.4,1.8l4,-2.6l-4.4,-1.6z" fill="#f9b060" stroke="#555" stroke-width="0.3" />
<path d="M8.8,115.2l4,-2.6v5.4l-4,2.6z" fill="#9a9a9a" stroke="#555" stroke-width="0.3" />
<path d="M10.4,116l4,4.4v-6z" fill="#d8d8d8" stroke="#555" stroke-width="0.5" />
<path d="M4.6,137.6l2.4,-4.6l3.4,-1.6l1.8,3l2,1.2v2.2l-4.6,1.6z" fill="#8a8a8a" stroke="#555" stroke-width="0.4" />
<path d="M5,158.6c2,-1.4 1,-7 4.4,-7s2.4,5.6 4.4,7z M8.4,159.8h2" fill="none" stroke="#555" stroke-width="0.8" />
<path d="M5.6,171l4,-2.4l4,2.4v6l-4,2.4l-4,-2.4z M9.6,173.2v6 M5.6,171l4,2.2l4,-2.2" fill="#dcdcdc" stroke="#666" stroke-width="0.6" />
<path d="M4.4,194.2c2.6,-3.4 7.8,-3.4 10.4,0" fill="none" stroke="#555" stroke-width="1.2" />
<circle cx="9.6" cy="194" r="1.5" fill="#6a8a3a"/>
<path d="M5,208.4h9.2v3.2h-1.8l-0.8,3.4h2.6v2.2h-9.2v-2.2h2.6l-0.8,-3.4h-1.8z" fill="#ececec" stroke="#555" stroke-width="0.7" />
<rect x="4.4" y="227.6" width="8" height="7.6" fill="#f4f4f4" stroke="#666" stroke-width="0.6" />
<rect x="7.4" y="230.6" width="8" height="7.6" fill="none" stroke="#666" stroke-width="0.6" />
<rect x="7" y="229.8" width="5.6" height="5.6" fill="#f28c1e" />
<path d="M4.6,256.6l2.4,-4.4l3.4,-1.4l1.8,2.8l2,1.2v2l-4.6,1.6z" fill="#8a8a8a" stroke="#555" stroke-width="0.4" />
<path d="M11.6,249l2.8,-1.6l0.4,3z" fill="#f28c1e" />
<path d="M4.6,273.6l4.6,-2.6l5,2l-4.6,3z M4.6,273.6v2.2l5,2.2v-2" fill="#d8d8d8" stroke="#555" stroke-width="0.5" />
<path d="M10.4,268.4l3,-1.2l0.4,3z" fill="#f28c1e" />
<circle cx="9" cy="298.6" r="3.6" fill="#9a9a9a" stroke="#666" stroke-width="0.5"/>
<path d="M9,292.4c4.6,0 6.6,3 6.6,6.2" fill="none" stroke="#aaa" stroke-width="0.6" />
<rect x="4.4" y="317.4" width="11" height="10.6" fill="#e8e8e8" stroke="#555" stroke-width="0.8" />
<circle cx="9.8" cy="322.8" r="3.6" fill="#2a7ab8"/>
<path d="M7.2,321.6c1.4,-1.2 3.6,1 5.4,-0.4" fill="none" stroke="#8fd0a0" stroke-width="0.8" />
<circle cx="9.8" cy="347.4" r="4.6" fill="#f6f6f6" stroke="#555" stroke-width="0.8"/>
<path d="M9.8,344.2v3.4h2.6" fill="none" stroke="#555" stroke-width="0.7" />
<rect x="5.4" y="363" width="2.6" height="3" fill="#e03030" />
<rect x="5.4" y="366" width="2.6" height="3" fill="#f0d020" />
<rect x="5.4" y="369" width="2.6" height="3" fill="#30b040" />
<rect x="5.4" y="372" width="2.6" height="2.4" fill="#2060d0" />
<path d="M8.6,364l5.4,9.6" fill="none" stroke="#222" stroke-width="1.4" />
<path d="M5.6,382.6v9.4 M7.6,387.4l6,-4.4 M7.6,387.4l6,4.6" fill="none" stroke="#2a5fa8" stroke-width="1.3" />
<path d="M9,385l5,1" fill="none" stroke="#222" stroke-width="0.9" />
<rect x="4.6" y="402.6" width="10.6" height="10.4" fill="#f2f2f2" stroke="#555" stroke-width="0.8" />
<path d="M6.6,404.8l6.6,6 M13.2,404.8l-6.6,6 M9.8,403.8v8" fill="none" stroke="#555" stroke-width="0.8" />
<rect x="4.6" y="423" width="11" height="9.4" fill="#dce8f6" stroke="#3a5a9a" stroke-width="0.8" />
<path d="M6,426h3 M10.6,426h3.6 M6,429.4h2 M9.6,429.4h4.6" fill="none" stroke="#3a5a9a" stroke-width="1" />
<rect x="178.2" y="78.4" width="704.4" height="414.2" fill="#ffffff" />
<rect x="178.7" y="79" width="703.3" height="412.7" fill="none" stroke="#cc9494" stroke-width="1.1" />
<line x1="578.7" y1="84.5" x2="250" y2="183" stroke="#a0a0a0" stroke-width="1.2" stroke-dasharray="6.8,3.4" stroke-linecap="butt"/>
<line x1="578.7" y1="84.5" x2="810.4" y2="189.8" stroke="#a0a0a0" stroke-width="1.2" stroke-dasharray="6.8,3.4" stroke-linecap="butt"/>
<line x1="578.7" y1="84.5" x2="578.7" y2="200" stroke="#a0a0a0" stroke-width="1.2" stroke-dasharray="6.8,3.4" stroke-linecap="butt"/>
<line x1="250" y1="183" x2="250" y2="379.8" stroke="#a0a0a0" stroke-width="1.2" stroke-dasharray="6.8,3.4" stroke-linecap="butt"/>
<line x1="810.4" y1="189.8" x2="810.4" y2="385.5" stroke="#a0a0a0" stroke-width="1.2" stroke-dasharray="6.8,3.4" stroke-linecap="butt"/>
<line x1="250" y1="379.8" x2="482.2" y2="486.8" stroke="#a0a0a0" stroke-width="1.2" stroke-dasharray="6.8,3.4" stroke-linecap="butt"/>
<line x1="810.4" y1="385.5" x2="482.2" y2="486.8" stroke="#a0a0a0" stroke-width="1.2" stroke-dasharray="6.8,3.4" stroke-linecap="butt"/>
<line x1="250" y1="379.8" x2="587" y2="284" stroke="#a0a0a0" stroke-width="1.2" stroke-dasharray="6.8,3.4" stroke-linecap="butt"/>
<line x1="810.4" y1="385.5" x2="587" y2="284" stroke="#a0a0a0" stroke-width="1.2" stroke-dasharray="6.8,3.4" stroke-linecap="butt"/>
<line x1="250" y1="183" x2="481.8" y2="290" stroke="#a0a0a0" stroke-width="1.2" stroke-dasharray="6.8,3.4" stroke-linecap="butt"/>
<line x1="810.4" y1="189.8" x2="481.8" y2="290" stroke="#a0a0a0" stroke-width="1.2" stroke-dasharray="6.8,3.4" stroke-linecap="butt"/>
<line x1="481.8" y1="290" x2="482.2" y2="486.8" stroke="#a0a0a0" stroke-width="1.2" stroke-dasharray="6.8,3.4" stroke-linecap="butt"/>
<path d="M374,262 L374,314.4 Q374.6,320 379.5,322 L483.7,366.9 Q494,373.6 505.6,368.6 L681.1,318.3 L687.2,309.8 L687.2,258 L500,250 Z" fill="#2a5fc6" stroke="#2a2420" stroke-width="0.9" />
<path d="M374,262 L374,314.4 Q374.6,320 379.5,322 L483.7,366.9 L483.7,300 Z" fill="#214c9e" />
<path d="M483.7,312 L483.7,366.9 Q494,373.6 505.6,368.6 L505.6,312 Z" fill="url(#gfil)" />
<path d="M374,262 L374,314.4 Q374.6,320 379.5,322 L483.7,366.9 Q494,373.6 505.6,368.6 L681.1,318.3 L687.2,309.8 L687.2,258" fill="none" stroke="#2a2420" stroke-width="1.2" />
<line x1="483.7" y1="316" x2="483.7" y2="366.6" stroke="#2a2420" stroke-width="0.7" />
<line x1="505.6" y1="316" x2="505.6" y2="368.4" stroke="#2a2420" stroke-width="0.7" />
<line x1="681.1" y1="264" x2="681.1" y2="318.3" stroke="#2a2420" stroke-width="0.6" />
<path d="M376.2,268 L376.2,313.6 Q377,318 380.6,319.6 L483.7,363.6" fill="none" stroke="#17356e" stroke-width="0.5" />
<path d="M505.6,365.2 L681.1,314.9" fill="none" stroke="#1c3f86" stroke-width="0.5" />
<rect x="681.1" y="262" width="6.1" height="50" fill="#3b74dc" />
<line x1="687.2" y1="258" x2="687.2" y2="309.8" stroke="#2a2420" stroke-width="0.8" />
<line x1="681.1" y1="264" x2="681.1" y2="318.3" stroke="#2a2420" stroke-width="0.6" />
<path d="M362.6,254.6 C362.8,257.4 365.4,258.8 368.7,260.2 L476,308.5 Q490.4,315 512,308.8 L689,257.3 C694,255.8 698.8,253.4 698.8,249.8 L698.8,258 C698.8,261.6 694,264 689,265.5 L512,317 Q490.4,323.2 476,316.7 L368.7,268.4 C365.4,267 362.8,265.6 362.6,262.8 Z" fill="#d36b24" stroke="#2a2420" stroke-width="1.2" />
<path d="M476,308.5 Q490.4,315 512,308.8 L512,317 Q490.4,323.2 476,316.7 Z" fill="url(#gorf)" />
<line x1="476.2" y1="309" x2="476.2" y2="316.8" stroke="#2a2420" stroke-width="0.7" />
<line x1="512.2" y1="309" x2="512.2" y2="317" stroke="#2a2420" stroke-width="0.7" />
<line x1="368.7" y1="260.4" x2="368.7" y2="268.4" stroke="#2a2420" stroke-width="0.7" />
<line x1="689" y1="257.6" x2="689" y2="265.6" stroke="#2a2420" stroke-width="0.7" />
<path d="M379,242.5 L551.7,190.9 Q566,186.5 581.2,192.6 L691.2,242.5 C695.5,244.5 698.8,247 698.8,249.8 C698.8,253.4 694,255.8 689,257.3 L512,308.8 Q490.4,315 476,308.5 L368.7,260.2 C365.4,258.8 362.8,257.4 362.6,254.6 C362.4,249.5 370,245.2 379,242.5 Z" fill="#e97c31" stroke="#2a2420" stroke-width="1.2" />
<path d="M385,250.6 L557.2,197.5 Q565,194.4 572.5,198.6 L678.1,245.8 Q686.4,249.5 679.2,251.8 L508,305.4 Q495,309.8 484,304.2 L384,257.2 Q376,253.4 385,250.6 Z" fill="#e77d34" />
<path d="M385,250.6 L557.2,197.5 L558.3,197.2 L558.4,257.1 L455.3,290.8 L384,257.2 Q376,253.4 385,250.6 Z" fill="#c8692c" />
<path d="M572.5,198.6 L678.1,245.8 Q686.4,249.5 679.2,251.8 L607.3,274.3 L572.1,259.3 Z" fill="#9c5022" />
<path d="M558.3,197.2 Q565,194.4 572.5,198.6 L572.1,259.3 Q565,254.8 558.4,257.1 Z" fill="url(#gofil)" />
<line x1="558.3" y1="197.4" x2="558.4" y2="257" stroke="#2a2420" stroke-width="0.7" />
<line x1="572.5" y1="198.8" x2="572.1" y2="259.2" stroke="#2a2420" stroke-width="0.7" />
<path d="M455.3,290.8 L558.4,257.1 Q565,254.8 572.1,259.3 L607.3,274.3" fill="none" stroke="#2a2420" stroke-width="2.2" />
<path d="M384.6,257.4 L381.6,255.8 L381.6,252.6" fill="none" stroke="#2a2420" stroke-width="0.6" />
<path d="M678.6,252 L680.4,250.6 L680.4,248" fill="none" stroke="#2a2420" stroke-width="0.6" />
<path d="M385,250.6 L557.2,197.5 Q565,194.4 572.5,198.6 L678.1,245.8 Q686.4,249.5 679.2,251.8 L508,305.4 Q495,309.8 484,304.2 L384,257.2 Q376,253.4 385,250.6 Z" fill="none" stroke="#2a2420" stroke-width="1.2" />
<path d="M458,292.4 L486,304.8 Q495.6,308.4 506,304.6 L606,273.6" fill="none" stroke="#2a2420" stroke-width="0.5" />
<g opacity="0.9">
<line x1="376" y1="241" x2="481.8" y2="290" stroke="#b4aca4" stroke-width="1.0" stroke-dasharray="6.8,3.4" stroke-linecap="butt"/>
<line x1="481.8" y1="290" x2="700" y2="222.6" stroke="#b4aca4" stroke-width="1.0" stroke-dasharray="6.8,3.4" stroke-linecap="butt"/>
<line x1="481.8" y1="290" x2="482" y2="372" stroke="#9fb0d0" stroke-width="1.0" stroke-dasharray="6.8,3.4" stroke-linecap="butt"/>
</g>
<rect x="480.4" y="79.8" width="99.6" height="16.6" fill="#ffffff" />
<line x1="480.4" y1="96.4" x2="580" y2="96.4" stroke="#dcdcdc" stroke-width="0.5" />
<line x1="580" y1="79.8" x2="580" y2="96.4" stroke="#dcdcdc" stroke-width="0.5" />
<rect x="486.3" y="83.5" width="66.7" height="10" fill="#ffffff" stroke="#707070" stroke-width="0.7" />
<text x="488" y="90.9" font-size="6.1" fill="#1a1a1a" textLength="27.6" lengthAdjust="spacingAndGlyphs" >Single Face</text>
<path d="M546.8,88h3.6l-1.8,2.2z" fill="#222" />
<rect x="559.6" y="88.2" width="1.1" height="1.1" fill="#333" />
<rect x="562.4" y="88.2" width="1.1" height="1.1" fill="#333" />
<rect x="565.2" y="88.2" width="1.1" height="1.1" fill="#333" />
<path d="M575.8,90.8h2.6l-1.3,1.6z" fill="#222" />
<line x1="573.4" y1="82.6" x2="573.4" y2="94" stroke="#e0e0e0" stroke-width="0.6" />
<path d="M214.4,432.6l13.6,-5l14,5v17l-14,5.2l-13.6,-5.2z M214.4,432.6l13.6,5.2l14,-5.2 M228,437.8v17" fill="none" stroke="#b4b4b4" stroke-width="0.6" />
<path d="M227.4,431.6v-15.2h-1.8l2.8,-7l2.8,7h-1.8v15.2z" fill="#1030d8" />
<path d="M241.8,434.6l8,-2.2l-0.5,-1.7l6,1.4l-4.4,4.2l-0.5,-1.7l-8,2.6z" fill="#2e9a48" />
<path d="M233.8,442.4l11,4.6l0.8,-1.8l4.8,5.2h-7l0.8,-1.8l-11.2,-4.2z" fill="#c83030" />
<text x="228.4" y="406.93" font-size="4.8" fill="#4a64e0" text-anchor="middle" >Z</text>
<text x="258.4" y="433.46" font-size="4.6" fill="#2e9a48" text-anchor="middle" >Y</text>
<text x="252.8" y="453.86" font-size="4.6" fill="#c83030" text-anchor="middle" >X</text>
<text x="181.6" y="489.56" font-size="6" fill="#c05a58" textLength="97" lengthAdjust="spacingAndGlyphs" >Isometric WORK Camera Isometric</text>
<line x1="178" y1="78.2" x2="882.6" y2="78.2" stroke="#3e4c74" stroke-width="1.0" />
<rect x="178.2" y="78" width="139.2" height="288" fill="#efefef" stroke="#d0d0d0" stroke-width="0.5" />
<rect x="178.2" y="78" width="139.2" height="11.4" fill="#0a5d90" />
<circle cx="184.6" cy="83.8" r="2.2" fill="none" stroke="#fff" stroke-width="1.3"/>
<text x="192" y="86.18" font-size="6.6" fill="#ffffff" textLength="42.4" lengthAdjust="spacingAndGlyphs" >Define Regions</text>
<path d="M292.4,82a2.5,2.5 0 1 1 -3.4,-0.2" fill="none" stroke="#fff" stroke-width="0.9" />
<path d="M290.6,80.2l2.6,1.6l-2.4,1.2z" fill="#fff" />
<text x="300.4" y="86.3" font-size="6.4" fill="#fff" font-weight="bold" text-anchor="middle" >?</text>
<path d="M307.6,81l4.8,5.4 M312.4,81l-4.8,5.4" fill="none" stroke="#fff" stroke-width="1.2" />
<rect x="180.4" y="91" width="134.8" height="173.6" fill="#ffffff" />
<path d="M185.2,96.4h3.6l-1.8,2.4z" fill="#2a76a6" />
<text x="192.4" y="99.95" font-size="6.8" fill="#2a76a6" textLength="42.2" lengthAdjust="spacingAndGlyphs" >Define Regions</text>
<path d="M185.6,113.2l2.2,2.4l4,-5.6" fill="none" stroke="#2aa838" stroke-width="1.2" />
<text x="194.8" y="115.2" font-size="6.1" fill="#222" textLength="57.6" lengthAdjust="spacingAndGlyphs" >Select Product Body (1)</text>
<rect x="295.2" y="104.8" width="14.8" height="14.8" fill="#f4f4f4" stroke="#a8a8a8" stroke-width="0.6" />
<path d="M298.2,110l4.4,-2.6l4.6,2.6v4.8l-4.6,2.6l-4.4,-2.6z" fill="#f28c1e" />
<path d="M298.2,110l4.4,2.4l4.6,-2.4l-4.6,-2.6z" fill="#f9a648" />
<rect x="184.6" y="122.4" width="125.2" height="90.6" fill="#ffffff" stroke="#dcdcdc" stroke-width="0.5" />
<rect x="184.6" y="122.4" width="125.2" height="9.2" fill="#efefef" />
<line x1="184.6" y1="131.6" x2="309.8" y2="131.6" stroke="#d8d8d8" stroke-width="0.5" />
<text x="188.6" y="129.4" font-size="6.1" fill="#333" textLength="34.4" lengthAdjust="spacingAndGlyphs" >Region Name</text>
<text x="263.6" y="129.4" font-size="6.1" fill="#333" textLength="15.6" lengthAdjust="spacingAndGlyphs" >Count</text>
<text x="305.4" y="129.4" font-size="6.1" fill="#333" >L</text>
<line x1="260.6" y1="122.4" x2="260.6" y2="213" stroke="#e2e2e2" stroke-width="0.5" />
<line x1="303" y1="122.4" x2="303" y2="213" stroke="#e2e2e2" stroke-width="0.5" />
<line x1="184.6" y1="140.9" x2="309.8" y2="140.9" stroke="#eeeeee" stroke-width="0.4" />
<line x1="184.6" y1="150.2" x2="309.8" y2="150.2" stroke="#eeeeee" stroke-width="0.4" />
<line x1="184.6" y1="159.5" x2="309.8" y2="159.5" stroke="#eeeeee" stroke-width="0.4" />
<line x1="184.6" y1="168.8" x2="309.8" y2="168.8" stroke="#eeeeee" stroke-width="0.4" />
<line x1="184.6" y1="178.1" x2="309.8" y2="178.1" stroke="#eeeeee" stroke-width="0.4" />
<line x1="184.6" y1="187.4" x2="309.8" y2="187.4" stroke="#eeeeee" stroke-width="0.4" />
<line x1="184.6" y1="196.7" x2="309.8" y2="196.7" stroke="#eeeeee" stroke-width="0.4" />
<rect x="202.8" y="168.9" width="107" height="9.2" fill="#cfe2ee" />
<path d="M190.6,133v40.4 M190.6,136h4 M190.6,145.2h4 M190.6,154.6h4 M190.6,163.8h4 M190.6,173.2h4" fill="none" stroke="#b0b0b0" stroke-width="0.4" />
<text x="203.8" y="138.1" font-size="6.1" fill="#222" textLength="19.6" lengthAdjust="spacingAndGlyphs" >All Faces</text>
<text x="263.6" y="138.1" font-size="6.1" fill="#222" >60</text>
<text x="203.8" y="147.4" font-size="6.1" fill="#222" textLength="40.6" lengthAdjust="spacingAndGlyphs" >Undefined Faces</text>
<text x="263.6" y="147.4" font-size="6.1" fill="#222" >0</text>
<text x="203.8" y="156.7" font-size="6.1" fill="#222" textLength="33" lengthAdjust="spacingAndGlyphs" >Cavity region</text>
<text x="263.6" y="156.7" font-size="6.1" fill="#222" >26</text>
<text x="305.4" y="156.7" font-size="6.1" fill="#222" clip-path="url(#cl3)">2(</text>
<text x="203.8" y="166.0" font-size="6.1" fill="#222" textLength="28.6" lengthAdjust="spacingAndGlyphs" >Core region</text>
<text x="263.6" y="166.0" font-size="6.1" fill="#222" >34</text>
<text x="305.4" y="166.0" font-size="6.1" fill="#222" clip-path="url(#cl3)">2:</text>
<text x="203.8" y="175.4" font-size="6.1" fill="#222" textLength="28.6" lengthAdjust="spacingAndGlyphs" >New region</text>
<text x="263.6" y="175.4" font-size="6.1" fill="#222" >0</text>
<text x="305.4" y="175.4" font-size="6.1" fill="#222" clip-path="url(#cl3)">2!</text>
<circle cx="197.4" cy="137" r="1.5" fill="#f28c1e"/>
<path d="M198,136.2l2,-2.4 M199.6,133.2l1.2,1.2" fill="none" stroke="#555" stroke-width="0.8" />
<path d="M195.6,145.2l1.8,2l3.4,-4.6" fill="none" stroke="#2aa838" stroke-width="1.1" />
<circle cx="198.4" cy="154.5" r="2.4" fill="#f9a648" stroke="#c06a1a" stroke-width="0.5"/>
<path d="M197,153.9h2.6v1.8h-2.6z" fill="none" stroke="#fff" stroke-width="0.4" />
<circle cx="198.4" cy="163.8" r="2.4" fill="#f9a648" stroke="#c06a1a" stroke-width="0.5"/>
<path d="M197,163.20000000000002h2.6v1.8h-2.6z" fill="none" stroke="#fff" stroke-width="0.4" />
<rect x="197.6" y="170.4" width="0.9" height="3.6" fill="#d42020" />
<rect x="197.6" y="174.8" width="0.9" height="0.9" fill="#d42020" />
<rect x="184.8" y="205.4" width="124.8" height="7.4" fill="#f0f0f0" />
<line x1="194.4" y1="210" x2="285" y2="210" stroke="#8a8a8a" stroke-width="1.3" />
<path d="M244.4,136.8v8l1.9,-1.7l1.4,3l1.2,-0.5l-1.4,-2.9h2.6z" fill="#ffffff" stroke="#222" stroke-width="0.5" />
<text x="185.8" y="225.6" font-size="6.1" fill="#222" textLength="46.6" lengthAdjust="spacingAndGlyphs" >Create New Region</text>
<rect x="295.2" y="215.4" width="14.8" height="14.6" fill="#fbfbfb" stroke="#a8a8a8" stroke-width="0.6" />
<path d="M298,222l4,-3.4l4,2.4l-4,3.2z" fill="#f28c1e" stroke="#8a5a20" stroke-width="0.4" />
<path d="M298,222v2l4,2.4v-2.2z" fill="#9a9a9a" />
<circle cx="305.4" cy="225.6" r="2.2" fill="#fff" stroke="#444" stroke-width="0.6"/>
<path d="M304.2,225.6h2.4 M305.4,224.4v2.4" fill="none" stroke="#444" stroke-width="0.5" />
<rect x="184.8" y="231.6" width="109.6" height="14.6" fill="#fcd674" />
<path d="M190.4,235.6v6.8 M187.4,237.2l6,3.6 M193.4,237.2l-6,3.6" fill="none" stroke="#e82020" stroke-width="1.2" />
<text x="194.8" y="241.2" font-size="6.1" fill="#111" textLength="56.4" lengthAdjust="spacingAndGlyphs" >Select Region Faces (0)</text>
<rect x="295.2" y="231.4" width="14.8" height="14.8" fill="#fcd674" stroke="#eac868" stroke-width="0.6" />
<path d="M297.8,237.4l4.8,-2.8l4.8,2.6l-4.8,3z" fill="#f28c1e" stroke="#c06a1a" stroke-width="0.3" />
<path d="M297.8,237.4v3l4.8,3v-3.2z" fill="#f4f0ea" stroke="#b8a890" stroke-width="0.3" />
<path d="M302.6,240.2l4.8,-3v3l-4.8,3.2z" fill="#d8d4cc" stroke="#b8a890" stroke-width="0.3" />
<text x="185.8" y="257.4" font-size="6.1" fill="#222" textLength="35" lengthAdjust="spacingAndGlyphs" >Search Region</text>
<rect x="295.2" y="247.4" width="14.8" height="14.8" fill="#fbfbfb" stroke="#a8a8a8" stroke-width="0.6" />
<path d="M298.6,252.2l1.4,-2h5.4l1.4,2" fill="none" stroke="#3a9a48" stroke-width="0.8" />
<path d="M298.6,256h2l0.8,-2h3l0.8,2h2" fill="none" stroke="#d05050" stroke-width="0.7" />
<rect x="180.4" y="267.4" width="134.8" height="57.8" fill="#ffffff" />
<path d="M185.2,273h3.6l-1.8,2.4z" fill="#2a76a6" />
<text x="192.4" y="276.45" font-size="6.8" fill="#2a76a6" textLength="23.4" lengthAdjust="spacingAndGlyphs" >Settings</text>
<rect x="186.4" y="284.20000000000005" width="5.2" height="5.2" fill="#fff" stroke="#555" stroke-width="0.6" rx="0.9" />
<text x="194" y="288.8" font-size="6.1" fill="#222" textLength="36.6" lengthAdjust="spacingAndGlyphs" >Create Regions</text>
<rect x="186.4" y="294.40000000000003" width="5.2" height="5.2" fill="#fff" stroke="#555" stroke-width="0.6" rx="0.9" />
<text x="194" y="299.0" font-size="6.1" fill="#222" textLength="49" lengthAdjust="spacingAndGlyphs" >Create Parting Lines</text>
<rect x="186.4" y="304.8" width="5.2" height="5.2" fill="#fff" stroke="#555" stroke-width="0.6" rx="0.9" />
<text x="194" y="309.4" font-size="6.1" fill="#222" textLength="81.6" lengthAdjust="spacingAndGlyphs" >Perform Sheet Boundary Analysis</text>
<rect x="186.4" y="315.0" width="5.2" height="5.2" fill="#fff" stroke="#555" stroke-width="0.6" rx="0.9" />
<text x="194" y="319.6" font-size="6.1" fill="#222" textLength="50.6" lengthAdjust="spacingAndGlyphs" >Display Parting Lines</text>
<rect x="180.4" y="327.6" width="134.8" height="10.6" fill="#ffffff" />
<path d="M186,331.4v3.8l2.4,-1.9z" fill="#2a76a6" />
<text x="192.4" y="335.85" font-size="6.8" fill="#2a76a6" textLength="43.4" lengthAdjust="spacingAndGlyphs" >Face Properties</text>
<path d="M245.2,344.8h4l-2,-2.4z" fill="#222" />
<line x1="180.4" y1="347.4" x2="315.2" y2="347.4" stroke="#d8d8d8" stroke-width="0.5" />
<rect x="212.6" y="350.6" width="30.4" height="11" fill="#f2f2f2" stroke="#c8c8c8" stroke-width="0.6" />
<text x="227.8" y="358.4" font-size="6.1" fill="#b0b0b0" text-anchor="middle" >OK</text>
<rect x="246" y="350.6" width="30.4" height="11" fill="#f2f2f2" stroke="#c8c8c8" stroke-width="0.6" />
<text x="261.2" y="358.4" font-size="6.1" fill="#b0b0b0" text-anchor="middle" >Apply</text>
<rect x="279.2" y="350.6" width="30.4" height="11" fill="#f8f8f8" stroke="#2a76a6" stroke-width="0.8" />
<text x="294.4" y="358.43" font-size="6.2" fill="#1c3450" text-anchor="middle" >Cancel</text>
</svg>
</body></html>
